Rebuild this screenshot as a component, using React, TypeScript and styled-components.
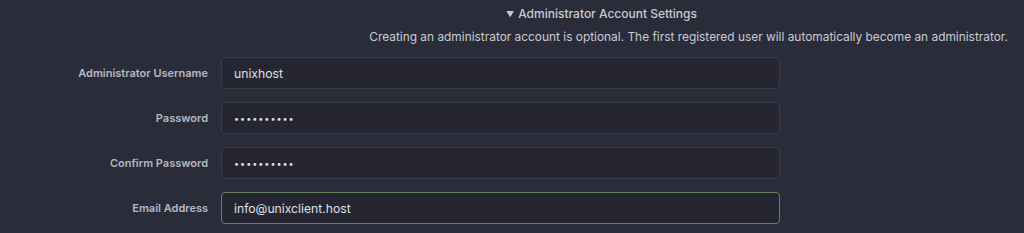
import React from "react";
import styled, { createGlobalStyle } from "styled-components";

const GlobalStyle = createGlobalStyle`
  html, body {
    margin: 0;
    padding: 0;
    background: #2a2c39;
  }
  body {
    font-family: Inter, "Noto Sans", "Liberation Sans", sans-serif;
    -webkit-font-smoothing: antialiased;
  }
`;

const Page = styled.div`
  width: 1024px;
  height: 233px;
  overflow: hidden;
  background: #2a2c39;
  box-sizing: border-box;
  padding-top: 5px;
`;

const SectionHeader = styled.div`
  display: flex;
  justify-content: center;
  padding-left: 221px;
  padding-right: 42px;
  height: 17px;
  align-items: center;
  color: #c9cbd3;
  font-size: 12px;
  font-weight: 500;
  gap: 4px;
`;

const Caret = styled.span`
  font-size: 8px;
  line-height: 1;
`;

const Description = styled.p`
  margin: 6px 16px 0 0;
  text-align: right;
  color: #c9cbd3;
  font-size: 11.9px;
  line-height: 17px;
`;

const Form = styled.div`
  display: grid;
  grid-template-columns: 208px 559px;
  column-gap: 13px;
  row-gap: 13px;
  margin-top: 12px;
`;

const Label = styled.label`
  text-align: right;
  align-self: center;
  color: #b6b8c2;
  font-size: 11px;
  font-weight: 600;
`;

const Input = styled.input<{ $focused?: boolean }>`
  box-sizing: border-box;
  height: 32px;
  width: 100%;
  padding: 0 12px;
  background: #252632;
  border: 1px solid ${(p) => (p.$focused ? "#66805c" : "#3a3c4a")};
  border-radius: 4px;
  color: #dfe0e6;
  font-family: inherit;
  font-size: 12.2px;
  outline: none;

  &[type="password"] {
    font-size: 9px;
    letter-spacing: 1px;
  }
`;

interface Field {
  label: string;
  value: string;
  type?: string;
  focused?: boolean;
}

const fields: Field[] = [
  { label: "Administrator Username", value: "unixhost" },
  { label: "Password", value: "unixhost12", type: "password" },
  { label: "Confirm Password", value: "unixhost12", type: "password" },
  { label: "Email Address", value: "info@unixclient.host", focused: true },
];

export default function App() {
  return (
    <Page>
      <GlobalStyle />
      <SectionHeader>
        <Caret>▼</Caret>
        <span>Administrator Account Settings</span>
      </SectionHeader>
      <Description>
        Creating an administrator account is optional. The first registered
        user will automatically become an administrator.
      </Description>
      <Form>
        {fields.map((f) => (
          <React.Fragment key={f.label}>
            <Label>{f.label}</Label>
            <Input
              type={f.type ?? "text"}
              defaultValue={f.value}
              readOnly
              $focused={f.focused}
            />
          </React.Fragment>
        ))}
      </Form>
    </Page>
  );
}
